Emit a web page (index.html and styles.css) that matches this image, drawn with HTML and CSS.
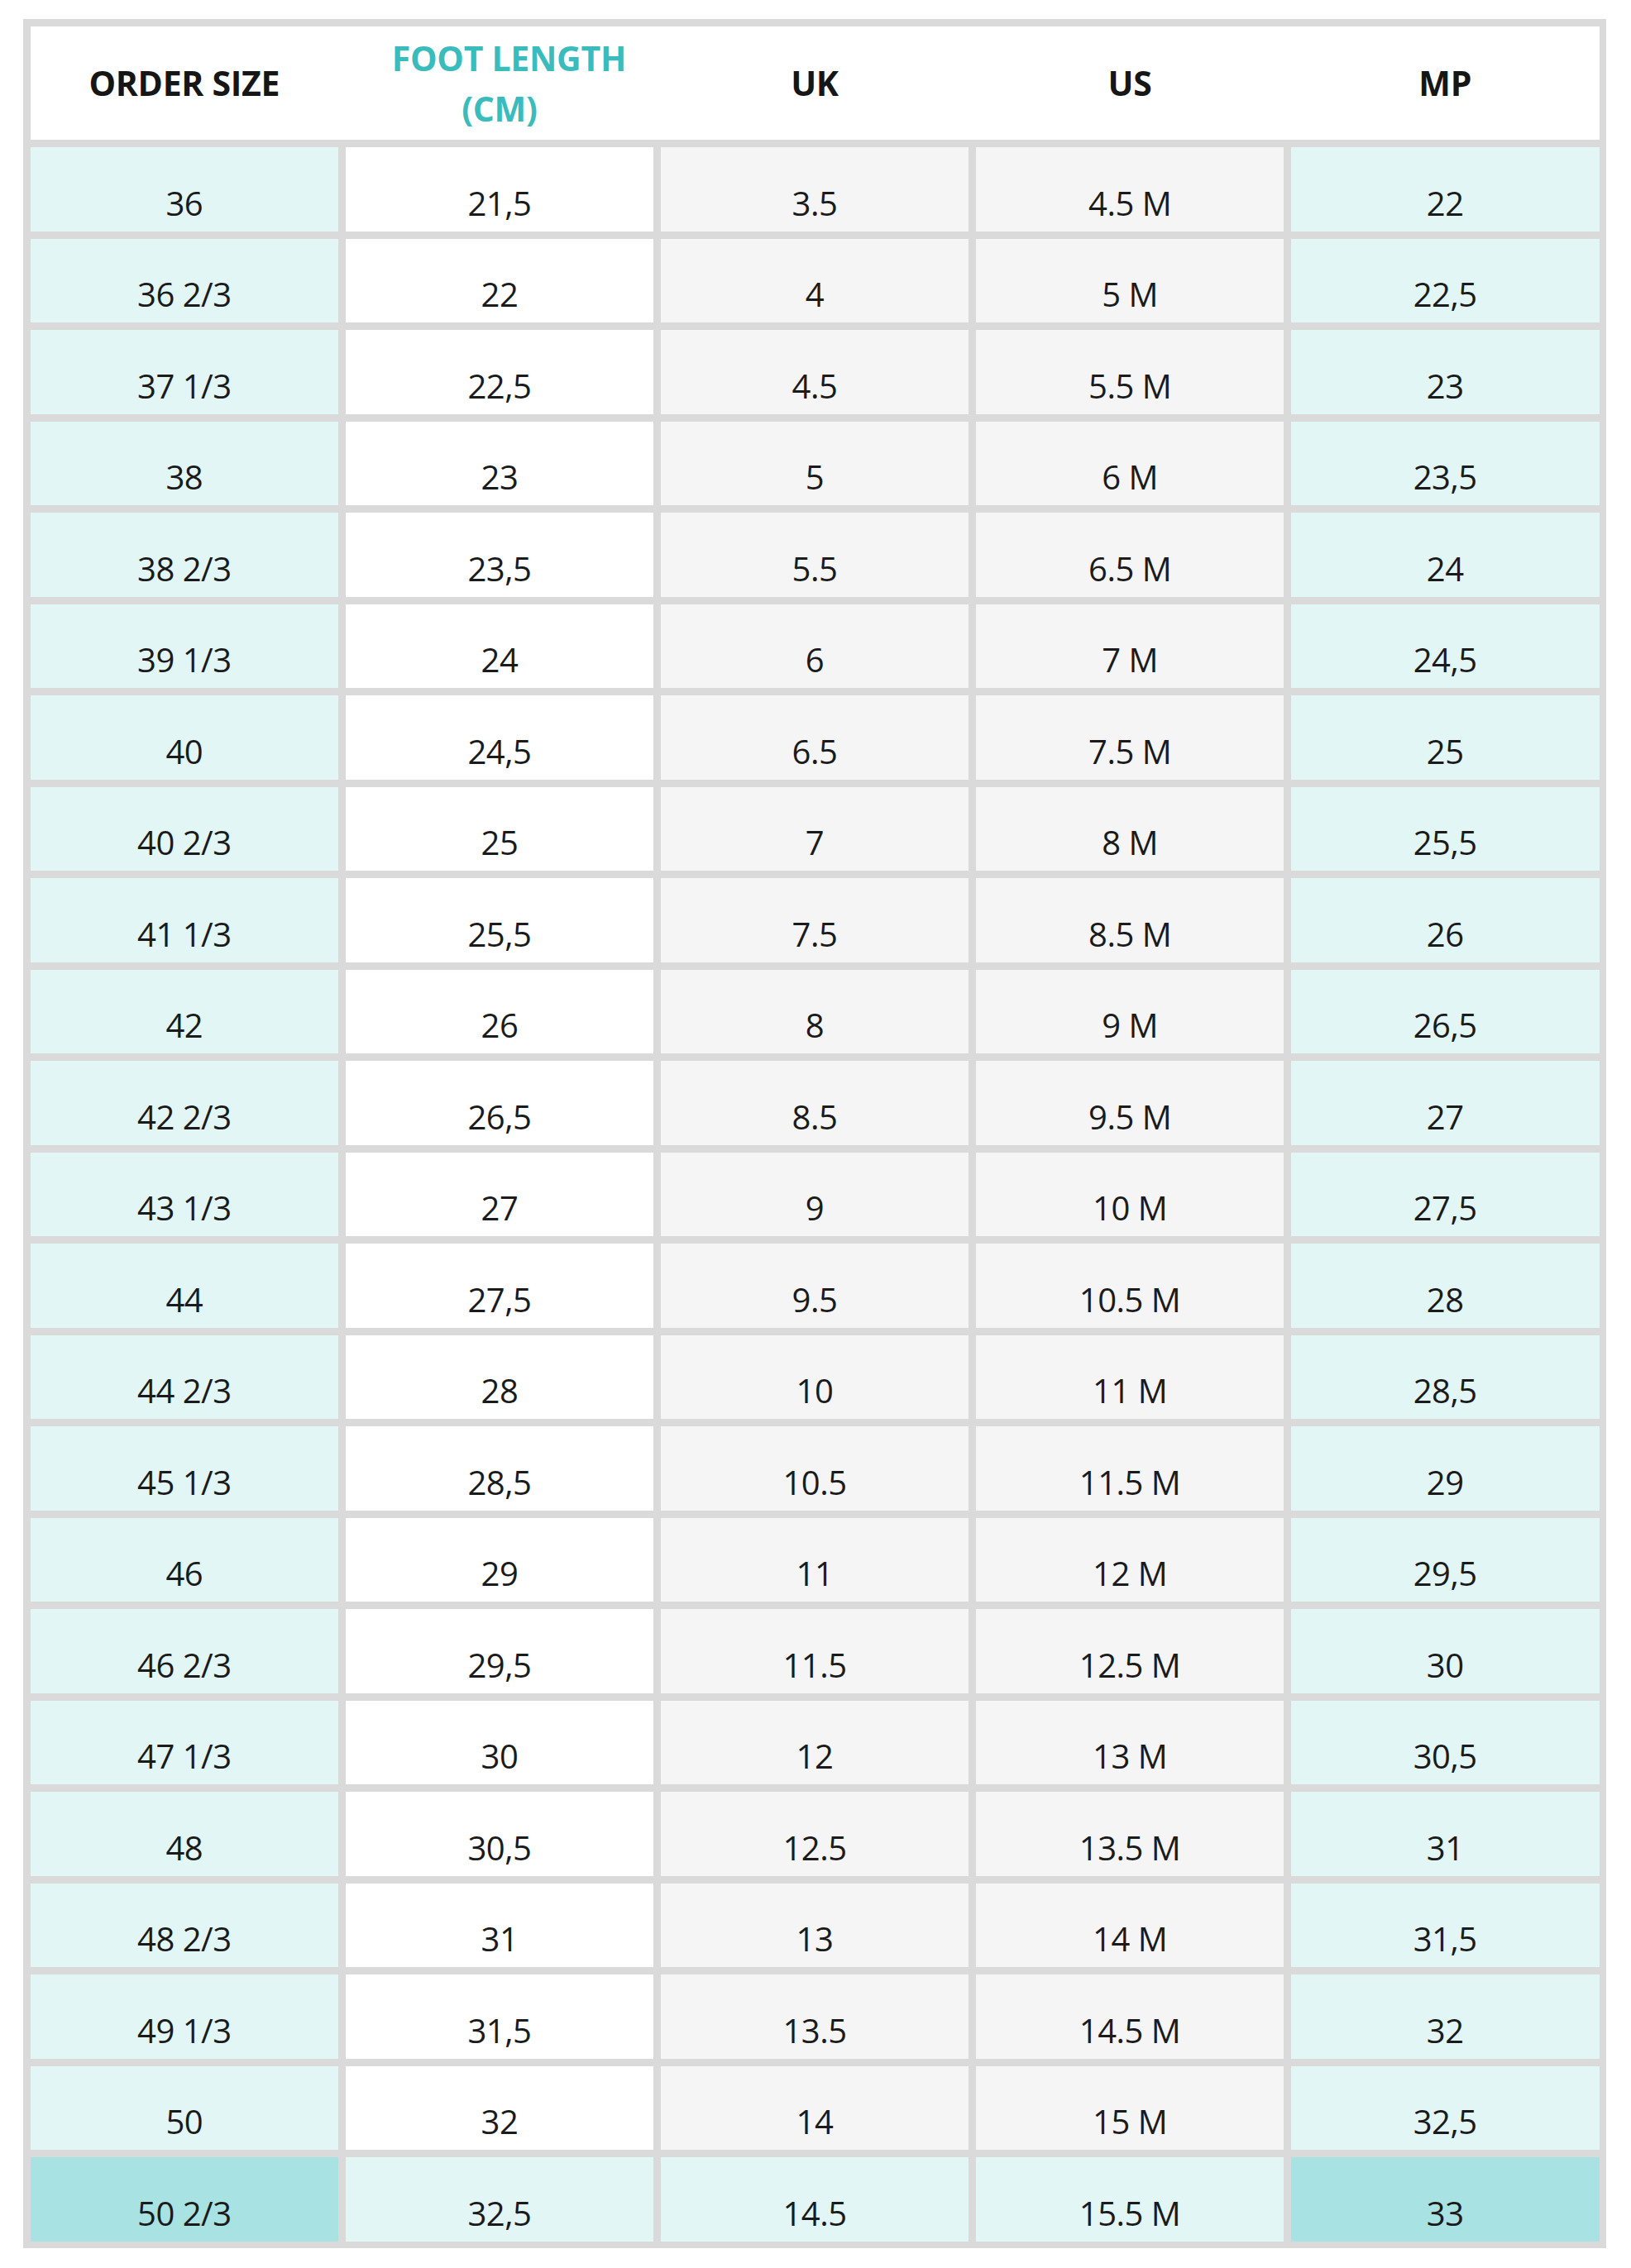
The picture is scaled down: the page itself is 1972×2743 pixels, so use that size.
FILE: index.html
```html
<!DOCTYPE html>
<html lang="en">
<head>
<meta charset="utf-8">
<title>Size chart</title>
<link rel="stylesheet" href="styles.css">
</head>
<body>
<div class="chart">
  <div class="head">
    <div class="hcell">ORDER SIZE</div>
    <div class="hcell accent">FOOT LENGTH<br>(CM)</div>
    <div class="hcell">UK</div>
    <div class="hcell">US</div>
    <div class="hcell">MP</div>
  </div>

  <div class="cell cyan">36</div><div class="cell white">21,5</div><div class="cell grey">3.5</div><div class="cell grey">4.5 M</div><div class="cell cyan">22</div>
  <div class="cell cyan">36 2/3</div><div class="cell white">22</div><div class="cell grey">4</div><div class="cell grey">5 M</div><div class="cell cyan">22,5</div>
  <div class="cell cyan">37 1/3</div><div class="cell white">22,5</div><div class="cell grey">4.5</div><div class="cell grey">5.5 M</div><div class="cell cyan">23</div>
  <div class="cell cyan">38</div><div class="cell white">23</div><div class="cell grey">5</div><div class="cell grey">6 M</div><div class="cell cyan">23,5</div>
  <div class="cell cyan">38 2/3</div><div class="cell white">23,5</div><div class="cell grey">5.5</div><div class="cell grey">6.5 M</div><div class="cell cyan">24</div>
  <div class="cell cyan">39 1/3</div><div class="cell white">24</div><div class="cell grey">6</div><div class="cell grey">7 M</div><div class="cell cyan">24,5</div>
  <div class="cell cyan">40</div><div class="cell white">24,5</div><div class="cell grey">6.5</div><div class="cell grey">7.5 M</div><div class="cell cyan">25</div>
  <div class="cell cyan">40 2/3</div><div class="cell white">25</div><div class="cell grey">7</div><div class="cell grey">8 M</div><div class="cell cyan">25,5</div>
  <div class="cell cyan">41 1/3</div><div class="cell white">25,5</div><div class="cell grey">7.5</div><div class="cell grey">8.5 M</div><div class="cell cyan">26</div>
  <div class="cell cyan">42</div><div class="cell white">26</div><div class="cell grey">8</div><div class="cell grey">9 M</div><div class="cell cyan">26,5</div>
  <div class="cell cyan">42 2/3</div><div class="cell white">26,5</div><div class="cell grey">8.5</div><div class="cell grey">9.5 M</div><div class="cell cyan">27</div>
  <div class="cell cyan">43 1/3</div><div class="cell white">27</div><div class="cell grey">9</div><div class="cell grey">10 M</div><div class="cell cyan">27,5</div>
  <div class="cell cyan">44</div><div class="cell white">27,5</div><div class="cell grey">9.5</div><div class="cell grey">10.5 M</div><div class="cell cyan">28</div>
  <div class="cell cyan">44 2/3</div><div class="cell white">28</div><div class="cell grey">10</div><div class="cell grey">11 M</div><div class="cell cyan">28,5</div>
  <div class="cell cyan">45 1/3</div><div class="cell white">28,5</div><div class="cell grey">10.5</div><div class="cell grey">11.5 M</div><div class="cell cyan">29</div>
  <div class="cell cyan">46</div><div class="cell white">29</div><div class="cell grey">11</div><div class="cell grey">12 M</div><div class="cell cyan">29,5</div>
  <div class="cell cyan">46 2/3</div><div class="cell white">29,5</div><div class="cell grey">11.5</div><div class="cell grey">12.5 M</div><div class="cell cyan">30</div>
  <div class="cell cyan">47 1/3</div><div class="cell white">30</div><div class="cell grey">12</div><div class="cell grey">13 M</div><div class="cell cyan">30,5</div>
  <div class="cell cyan">48</div><div class="cell white">30,5</div><div class="cell grey">12.5</div><div class="cell grey">13.5 M</div><div class="cell cyan">31</div>
  <div class="cell cyan">48 2/3</div><div class="cell white">31</div><div class="cell grey">13</div><div class="cell grey">14 M</div><div class="cell cyan">31,5</div>
  <div class="cell cyan">49 1/3</div><div class="cell white">31,5</div><div class="cell grey">13.5</div><div class="cell grey">14.5 M</div><div class="cell cyan">32</div>
  <div class="cell cyan">50</div><div class="cell white">32</div><div class="cell grey">14</div><div class="cell grey">15 M</div><div class="cell cyan">32,5</div>
  <div class="cell dark">50 2/3</div><div class="cell cyan">32,5</div><div class="cell cyan">14.5</div><div class="cell cyan">15.5 M</div><div class="cell dark">33</div>
</div>
</body>
</html>
```

FILE: styles.css
```css
html, body {
  margin: 0;
  padding: 0;
  background: #ffffff;
}

body {
  font-family: "Open Sans", "Noto Sans", "DejaVu Sans", sans-serif;
  color: #1b1b1b;
}

.chart {
  box-sizing: border-box;
  width: 1914px;
  margin: 23px 0 0 28px;
  padding: 9px 8.5px 8px;
  background: #dadada;
  display: grid;
  grid-template-columns: repeat(5, 1fr);
  grid-template-rows: 137px;
  grid-auto-rows: 101.5px;
  column-gap: 8.5px;
  row-gap: 9px;
}

.head {
  grid-column: 1 / -1;
  background: #ffffff;
  display: grid;
  grid-template-columns: repeat(5, 1fr);
  column-gap: 8.5px;
  align-items: center;
}

.hcell {
  text-align: center;
  font-weight: 700;
  font-size: 41px;
  line-height: 1;
  color: #161616;
  letter-spacing: -0.3px;
}

.hcell.accent {
  color: #3bbcbc;
  line-height: 61px;
  text-indent: 23px;
}

.cell {
  display: flex;
  align-items: flex-end;
  justify-content: center;
  padding-bottom: 14px;
  box-sizing: border-box;
  font-size: 40px;
  line-height: 1;
  letter-spacing: -0.5px;
}

.cyan { background: #e2f6f6; }
.white { background: #ffffff; }
.grey { background: #f5f5f5; }
.dark { background: #a9e2e2; }
```
